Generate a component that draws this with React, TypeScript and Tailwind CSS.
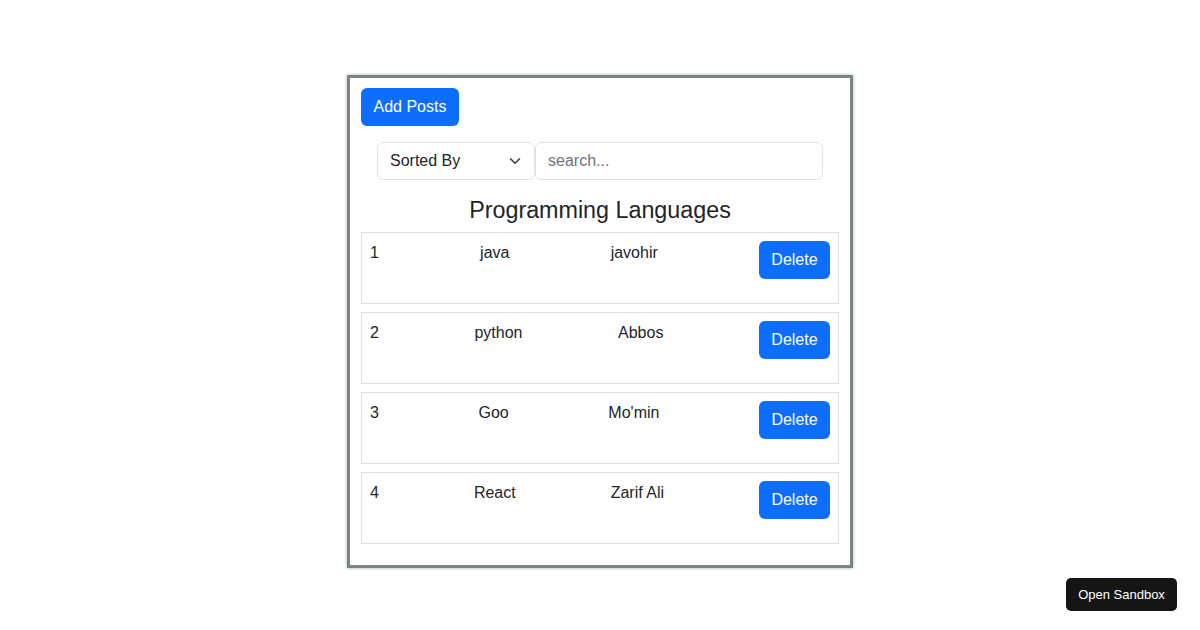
import { useState } from "react";

type Post = { id: number; title: string; body: string };

const initialPosts: Post[] = [
  { id: 1, title: "java", body: "javohir" },
  { id: 2, title: "python", body: "Abbos" },
  { id: 3, title: "Goo", body: "Mo'min" },
  { id: 4, title: "React", body: "Zarif Ali" },
];

const ChevronDown = (props: React.SVGProps<SVGSVGElement>) => (
  <svg {...props} xmlns="http://www.w3.org/2000/svg" viewBox="0 0 16 16" fill="none">
    <path d="m2 5 6 6 6-6" stroke="#343a40" strokeWidth="2" strokeLinecap="round" strokeLinejoin="round" />
  </svg>
);

function PostItem({ post, onDelete }: { post: Post; onDelete: (id: number) => void }) {
  return (
    <div className="mb-2 flex h-[72px] items-start justify-between border border-[#dee2e6] px-2 pt-2">
      <span className="leading-6">{post.id}</span>
      <span className="leading-6">{post.title}</span>
      <span className="leading-6">{post.body}</span>
      <button
        className="h-[38px] w-[71px] rounded-md bg-[#0d6efd] text-white"
        onClick={() => onDelete(post.id)}
      >
        Delete
      </button>
    </div>
  );
}

export default function App() {
  const [posts, setPosts] = useState<Post[]>(initialPosts);
  const [query, setQuery] = useState("");

  const deletePost = (id: number) => setPosts(posts.filter((p) => p.id !== id));

  return (
    <div className="relative h-[630px] overflow-hidden bg-white pt-[75px] font-['Liberation_Sans',Arial,sans-serif] text-base text-[#212529]">
      <div className="mx-auto w-[506px] border-[3px] border-[#7b8683] px-[11px] pb-[13px] pt-2.5 shadow-[0_0_3px_#a7afad]">
        <button className="h-[38px] w-[98px] rounded-md bg-[#0d6efd] text-white">Add Posts</button>

        <div className="mx-4 mt-4 flex">
          <div className="relative w-[158px]">
            <select className="h-[38px] w-full appearance-none rounded-md border border-[#dee2e6] bg-white pl-3 pr-9 text-[#212529] outline-none">
              <option>Sorted By</option>
              <option value="title">Title</option>
              <option value="body">Body</option>
            </select>
            <ChevronDown className="pointer-events-none absolute right-3 top-[13px] h-3 w-4" />
          </div>
          <input
            className="h-[38px] flex-1 rounded-md border border-[#dee2e6] px-3 outline-none placeholder:text-[#6c757d]"
            placeholder="search..."
            value={query}
            onChange={(e) => setQuery(e.target.value)}
          />
        </div>

        <h4 className="mb-2 mt-4 text-center text-[23.3px] leading-[28px]">Programming Languages</h4>

        {posts.map((post) => (
          <PostItem key={post.id} post={post} onDelete={deletePost} />
        ))}
      </div>

      <button className="absolute bottom-[19px] right-[23px] h-[33px] w-[111px] rounded-[5px] bg-[#151515] text-[13px] text-white">
        Open Sandbox
      </button>
    </div>
  );
}
